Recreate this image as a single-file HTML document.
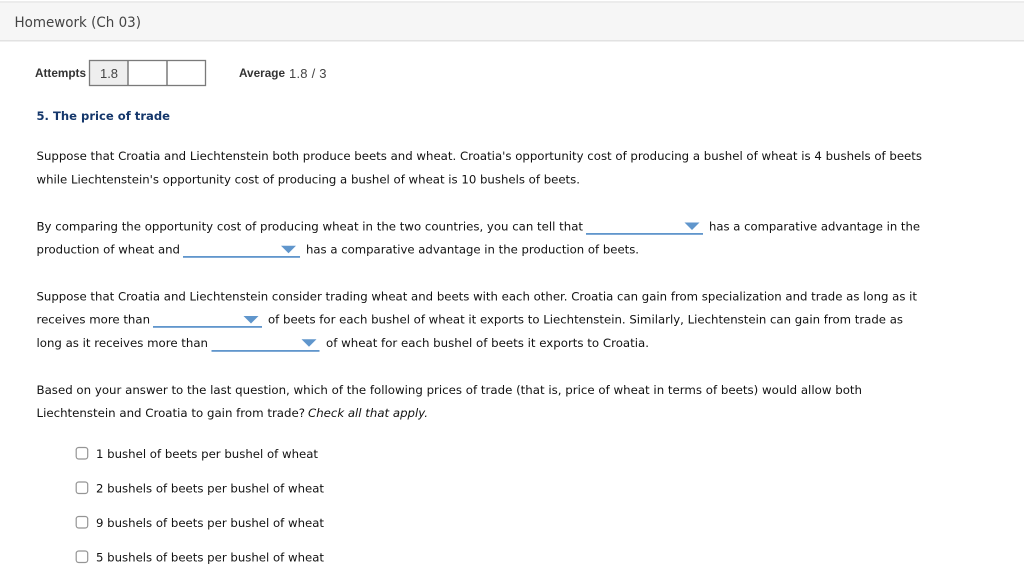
<!DOCTYPE html>
<html lang="en">
<head>
<meta charset="utf-8">
<title>Homework (Ch 03)</title>
<style>
html,body{margin:0;padding:0;background:#fff;width:1024px;height:585px;overflow:hidden}
svg{display:block}
.t{font-family:"DejaVu Sans",sans-serif;font-size:11.5px;fill:#111}
.a{font-family:"Liberation Sans",sans-serif}
</style>
</head>
<body>
<svg width="1024" height="585" viewBox="0 0 1024 585" xmlns="http://www.w3.org/2000/svg">
<rect x="0" y="0" width="1024" height="1" fill="#fff"/>
<rect x="0" y="1" width="1024" height="2" fill="#ececec"/>
<rect x="0" y="3" width="1024" height="37" fill="#f6f6f6"/>
<rect x="0" y="40" width="1024" height="1.5" fill="#e2e2e2"/>
<text x="14.5" y="27" font-family="DejaVu Sans, sans-serif" font-size="14px" fill="#444" textLength="126.5" lengthAdjust="spacingAndGlyphs">Homework (Ch 03)</text>

<text x="35" y="77" class="a" font-size="12px" font-weight="700" fill="#333" textLength="51" lengthAdjust="spacingAndGlyphs">Attempts</text>
<rect x="90" y="61" width="38" height="24" fill="#eee"/>
<rect x="89.500" y="60.500" width="116" height="25" fill="none" stroke="#7a7a7a" stroke-width="1.300"/>
<line x1="128" y1="61" x2="128" y2="85" stroke="#7a7a7a" stroke-width="1.500"/>
<line x1="167" y1="61" x2="167" y2="85" stroke="#7a7a7a" stroke-width="1.500"/>
<text x="100" y="78" class="a" font-size="13px" fill="#444" textLength="18">1.8</text>
<text x="239" y="77" class="a" font-size="12px" font-weight="700" fill="#333" textLength="46" lengthAdjust="spacingAndGlyphs">Average</text>
<text x="289" y="78" class="a" font-size="13px" fill="#444" textLength="37.500">1.8 / 3</text>

<text x="36.500" y="120" font-family="DejaVu Sans, sans-serif" font-size="11.500px" font-weight="700" fill="#15376b" textLength="133.500" lengthAdjust="spacingAndGlyphs">5. The price of trade</text>

<text class="t" x="36.500" y="160" textLength="885.500" lengthAdjust="spacingAndGlyphs">Suppose that Croatia and Liechtenstein both produce beets and wheat. Croatia's opportunity cost of producing a bushel of wheat is 4 bushels of beets</text>
<text class="t" x="36.500" y="183.500" textLength="543.500" lengthAdjust="spacingAndGlyphs">while Liechtenstein's opportunity cost of producing a bushel of wheat is 10 bushels of beets.</text>

<text class="t" x="36.500" y="230.500" textLength="546.500" lengthAdjust="spacingAndGlyphs">By comparing the opportunity cost of producing wheat in the two countries, you can tell that</text>
<text class="t" x="709" y="230.500" textLength="211" lengthAdjust="spacingAndGlyphs">has a comparative advantage in the</text>
<text class="t" x="36.500" y="253.500" textLength="143.500" lengthAdjust="spacingAndGlyphs">production of wheat and</text>
<text class="t" x="306" y="253.500" textLength="333" lengthAdjust="spacingAndGlyphs">has a comparative advantage in the production of beets.</text>

<text class="t" x="36.500" y="300.500" textLength="880.500" lengthAdjust="spacingAndGlyphs">Suppose that Croatia and Liechtenstein consider trading wheat and beets with each other. Croatia can gain from specialization and trade as long as it</text>
<text class="t" x="36.500" y="323.500" textLength="113.500" lengthAdjust="spacingAndGlyphs">receives more than</text>
<text class="t" x="268" y="323.500" textLength="635" lengthAdjust="spacingAndGlyphs">of beets for each bushel of wheat it exports to Liechtenstein. Similarly, Liechtenstein can gain from trade as</text>
<text class="t" x="36.500" y="347" textLength="171.500" lengthAdjust="spacingAndGlyphs">long as it receives more than</text>
<text class="t" x="326" y="347" textLength="323" lengthAdjust="spacingAndGlyphs">of wheat for each bushel of beets it exports to Croatia.</text>

<text class="t" x="36.500" y="394" textLength="825.500" lengthAdjust="spacingAndGlyphs">Based on your answer to the last question, which of the following prices of trade (that is, price of wheat in terms of beets) would allow both</text>
<text class="t" x="36.500" y="417" textLength="268.500" lengthAdjust="spacingAndGlyphs">Liechtenstein and Croatia to gain from trade?</text>
<text class="t" x="308" y="417" font-style="italic" textLength="120" lengthAdjust="spacingAndGlyphs">Check all that apply.</text>

<g fill="#6096cc">
<rect x="586" y="233" width="117" height="1.800"/>
<path d="M684.500 222.500h15l-7.500 7.500z"/>
<rect x="183" y="256" width="117" height="1.800"/>
<path d="M281 245.800h15l-7.500 7.500z"/>
<rect x="153" y="326" width="109" height="1.800"/>
<path d="M243.500 316h15l-7.500 7.500z"/>
<rect x="211.500" y="350" width="108" height="1.800"/>
<path d="M301.500 339.300h15l-7.500 7.500z"/>
</g>

<g fill="#fff" stroke="#959595" stroke-width="1.200">
<rect x="76.200" y="447.500" width="11.500" height="11.500" rx="2.500"/>
<rect x="76.200" y="482" width="11.500" height="11.500" rx="2.500"/>
<rect x="76.200" y="516.500" width="11.500" height="11.500" rx="2.500"/>
<rect x="76.200" y="551" width="11.500" height="11.500" rx="2.500"/>
</g>
<text class="t" x="96" y="458" textLength="222" lengthAdjust="spacingAndGlyphs">1 bushel of beets per bushel of wheat</text>
<text class="t" x="96" y="492.500" textLength="228" lengthAdjust="spacingAndGlyphs">2 bushels of beets per bushel of wheat</text>
<text class="t" x="96" y="527" textLength="228" lengthAdjust="spacingAndGlyphs">9 bushels of beets per bushel of wheat</text>
<text class="t" x="96" y="561.500" textLength="228" lengthAdjust="spacingAndGlyphs">5 bushels of beets per bushel of wheat</text>
</svg>
</body>
</html>
